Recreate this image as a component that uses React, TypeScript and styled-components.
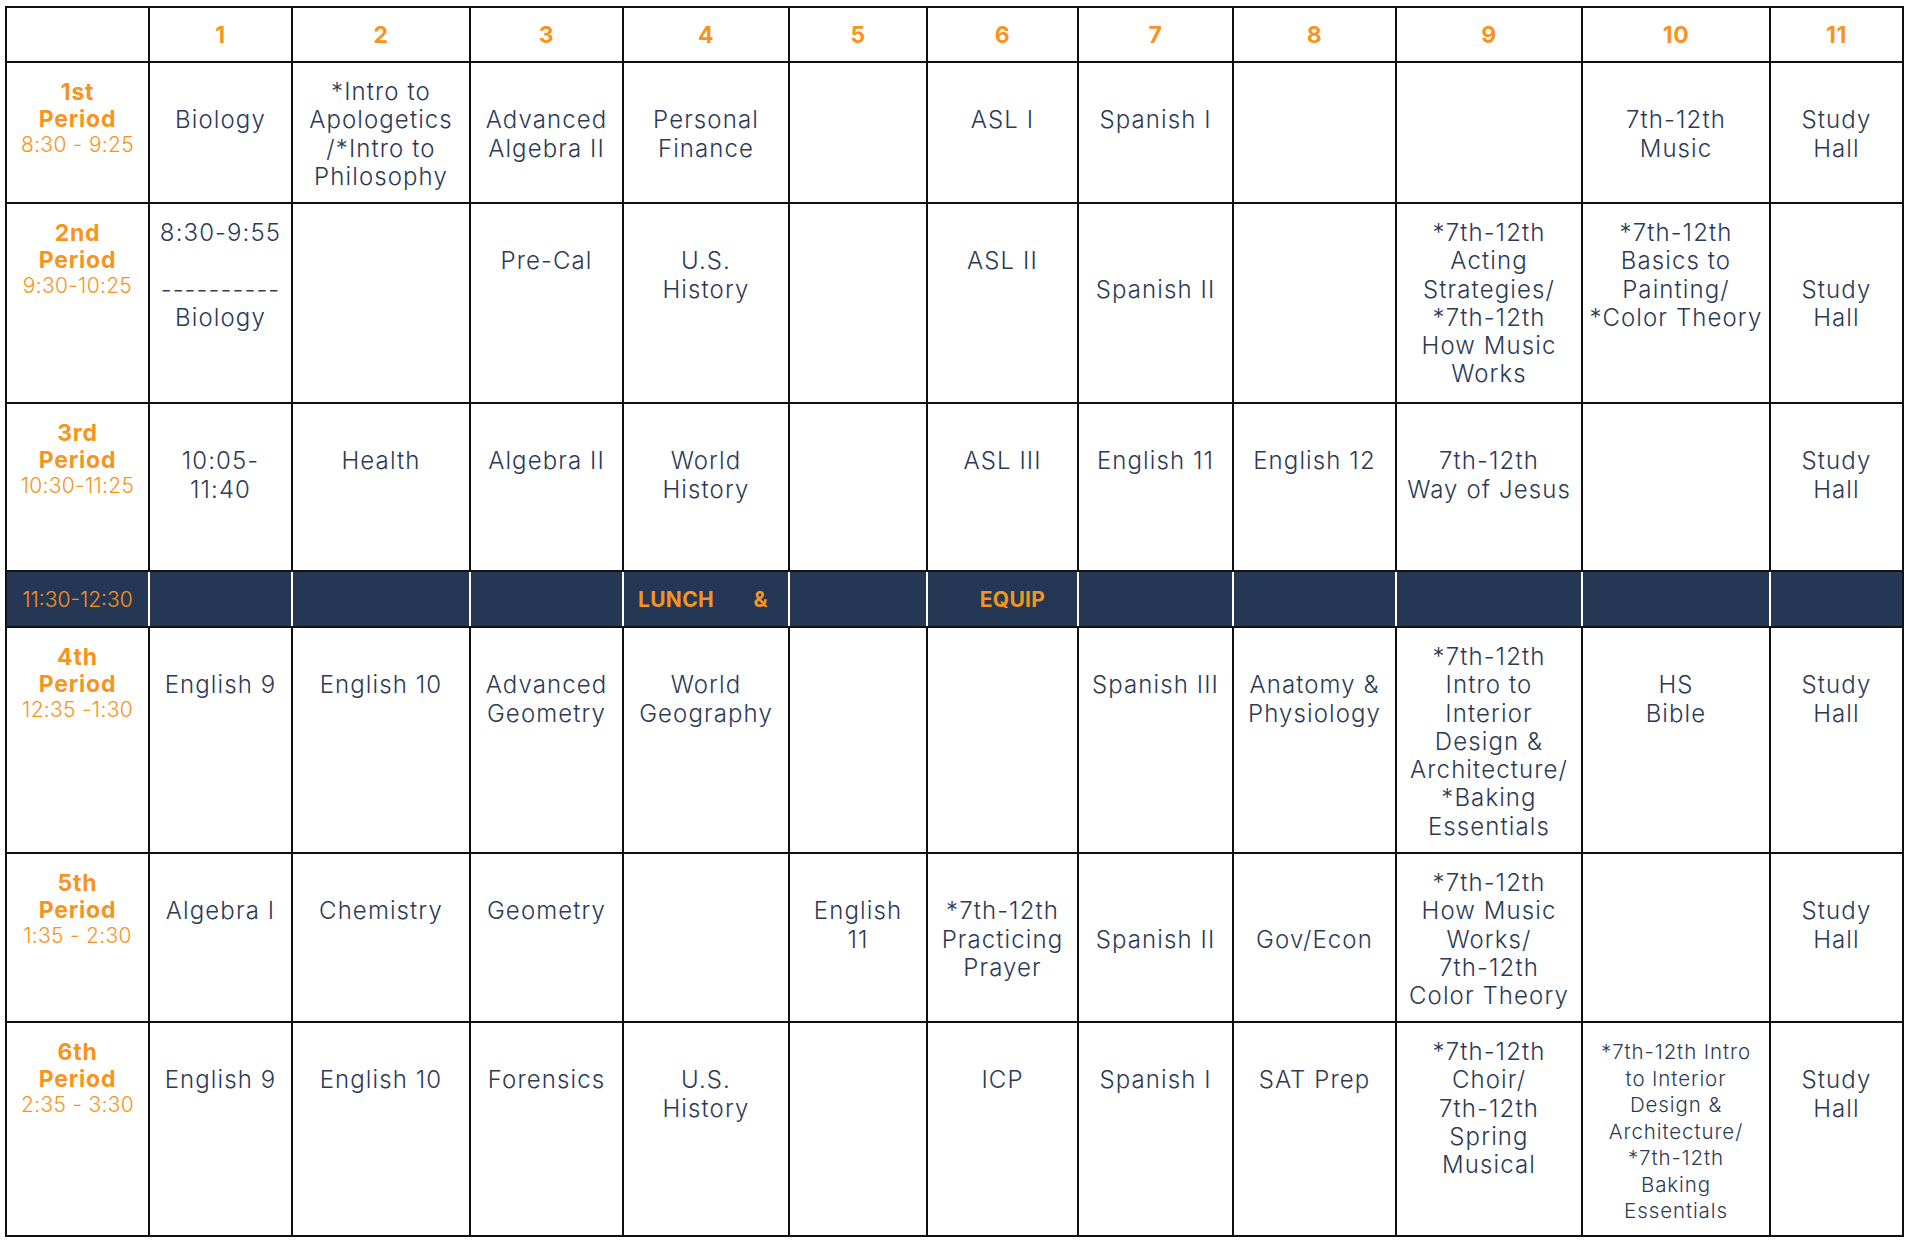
import React from 'react';
import styled, { createGlobalStyle } from 'styled-components';

const GlobalStyle = createGlobalStyle`
  html, body {
    margin: 0;
    padding: 0;
    background: #fff;
  }
  body {
    font-family: Inter, 'Noto Sans', sans-serif;
  }
`;

const ORANGE = '#f7941d';
const NAVY = '#243855';
const INK = '#2c3a56';

// track sizes measured off the printed schedule
const COLUMNS = [141, 141, 176, 151, 164, 136, 149, 153, 161, 184, 186, 131];
const ROWS = [53, 139, 198, 166, 54, 224, 167, 212];

type Entry = string[] | { small: true; lines: string[] };

type Period = {
  name: string;
  time: string;
  classes: Entry[];
};

const periods: Period[] = [
  {
    name: '1st',
    time: '8:30 - 9:25',
    classes: [
      ['', 'Biology'],
      ['*Intro to', 'Apologetics', '/*Intro to', 'Philosophy'],
      ['', 'Advanced', 'Algebra II'],
      ['', 'Personal', 'Finance'],
      [],
      ['', 'ASL I'],
      ['', 'Spanish I'],
      [],
      [],
      ['', '7th-12th', 'Music'],
      ['', 'Study', 'Hall'],
    ],
  },
  {
    name: '2nd',
    time: '9:30-10:25',
    classes: [
      ['8:30-9:55', '', '----------', 'Biology'],
      [],
      ['', 'Pre-Cal'],
      ['', 'U.S.', 'History'],
      [],
      ['', 'ASL II'],
      ['', '', 'Spanish II'],
      [],
      ['*7th-12th', 'Acting', 'Strategies/', '*7th-12th', 'How Music', 'Works'],
      ['*7th-12th', 'Basics to', 'Painting/', '*Color Theory'],
      ['', '', 'Study', 'Hall'],
    ],
  },
  {
    name: '3rd',
    time: '10:30-11:25',
    classes: [
      ['', '10:05-', '11:40'],
      ['', 'Health'],
      ['', 'Algebra II'],
      ['', 'World', 'History'],
      [],
      ['', 'ASL III'],
      ['', 'English 11'],
      ['', 'English 12'],
      ['', '7th-12th', 'Way of Jesus'],
      [],
      ['', 'Study', 'Hall'],
    ],
  },
  {
    name: '4th',
    time: '12:35 -1:30',
    classes: [
      ['', 'English 9'],
      ['', 'English 10'],
      ['', 'Advanced', 'Geometry'],
      ['', 'World', 'Geography'],
      [],
      [],
      ['', 'Spanish III'],
      ['', 'Anatomy &', 'Physiology'],
      ['*7th-12th', 'Intro to', 'Interior', 'Design &', 'Architecture/', '*Baking', 'Essentials'],
      ['', 'HS', 'Bible'],
      ['', 'Study', 'Hall'],
    ],
  },
  {
    name: '5th',
    time: '1:35 - 2:30',
    classes: [
      ['', 'Algebra I'],
      ['', 'Chemistry'],
      ['', 'Geometry'],
      [],
      ['', 'English', '11'],
      ['', '*7th-12th', 'Practicing', 'Prayer'],
      ['', '', 'Spanish II'],
      ['', '', 'Gov/Econ'],
      ['*7th-12th', 'How Music', 'Works/', '7th-12th', 'Color Theory'],
      [],
      ['', 'Study', 'Hall'],
    ],
  },
  {
    name: '6th',
    time: '2:35 - 3:30',
    classes: [
      ['', 'English 9'],
      ['', 'English 10'],
      ['', 'Forensics'],
      ['', 'U.S.', 'History'],
      [],
      ['', 'ICP'],
      ['', 'Spanish I'],
      ['', 'SAT Prep'],
      ['*7th-12th', 'Choir/', '7th-12th', 'Spring', 'Musical'],
      {
        small: true,
        lines: ['*7th-12th Intro', 'to Interior', 'Design &', 'Architecture/', '*7th-12th', 'Baking', 'Essentials'],
      },
      ['', 'Study', 'Hall'],
    ],
  },
];

const renderLines = (lines: string[]) =>
  lines.map((line, i) => <Line key={i}>{line || '\u00a0'}</Line>);

const PeriodRow = ({ period }: { period: Period }) => (
  <>
    <LabelCell>
      <LabelName>{period.name}</LabelName>
      <LabelName>Period</LabelName>
      <LabelTime>{period.time}</LabelTime>
    </LabelCell>
    {period.classes.map((entry, i) =>
      Array.isArray(entry) ? (
        <Cell key={i}>{renderLines(entry)}</Cell>
      ) : (
        <Cell key={i} $small>
          {renderLines(entry.lines)}
        </Cell>
      )
    )}
  </>
);

const LunchRow = () => (
  <>
    <LunchCell>
      <LunchTime>11:30-12:30</LunchTime>
    </LunchCell>
    <LunchCell $divider />
    <LunchCell $divider />
    <LunchCell $divider />
    <LunchCell $divider $spread>
      <LunchWord>LUNCH</LunchWord>
      <LunchWord>&amp;</LunchWord>
    </LunchCell>
    <LunchCell $divider />
    <LunchCell $divider $nudge>
      <LunchWord>EQUIP</LunchWord>
    </LunchCell>
    <LunchCell $divider />
    <LunchCell $divider />
    <LunchCell $divider />
    <LunchCell $divider />
    <LunchCell $divider />
  </>
);

const App = () => {
  return (
    <>
      <GlobalStyle />
      <Page>
        <Schedule>
          <HeadCell />
          {Array.from({ length: 11 }, (_, i) => (
            <HeadCell key={i}>{i + 1}</HeadCell>
          ))}
          {periods.slice(0, 3).map((p) => (
            <PeriodRow key={p.name} period={p} />
          ))}
          <LunchRow />
          {periods.slice(3).map((p) => (
            <PeriodRow key={p.name} period={p} />
          ))}
        </Schedule>
      </Page>
    </>
  );
};

export default App;

const Page = styled.div`
  padding: 6px 0 0 5px;
`;

const Schedule = styled.div`
  display: grid;
  grid-template-columns: ${COLUMNS.map((c) => `${c}px`).join(' ')};
  grid-template-rows: ${ROWS.map((r) => `${r}px`).join(' ')};
  gap: 2px;
  padding: 2px;
  width: max-content;
  background: #111;
`;

const HeadCell = styled.div`
  display: flex;
  align-items: center;
  justify-content: center;
  background: #fff;
  color: ${ORANGE};
  font-size: 23px;
  font-weight: 700;
  letter-spacing: 0.5px;
`;

const LabelCell = styled.div`
  display: flex;
  flex-direction: column;
  align-items: center;
  padding-top: 16px;
  background: #fff;
  color: ${ORANGE};
  line-height: 26.5px;
  white-space: nowrap;
`;

const LabelName = styled.div`
  font-size: 23px;
  font-weight: 700;
  letter-spacing: 0.8px;
`;

const LabelTime = styled.div`
  font-size: 21px;
  font-weight: 300;
  letter-spacing: 0.3px;
`;

const Cell = styled.div<{ $small?: boolean }>`
  padding-top: ${({ $small }) => ($small ? '16px' : '15px')};
  background: #fff;
  color: ${INK};
  text-align: center;
  font-size: ${({ $small }) => ($small ? '20.5px' : '24px')};
  line-height: ${({ $small }) => ($small ? '26.5px' : '28.3px')};
  font-weight: 300;
  letter-spacing: ${({ $small }) => ($small ? '0.9px' : '1.1px')};
  white-space: nowrap;
`;

const Line = styled.div``;

const LunchCell = styled.div<{ $divider?: boolean; $spread?: boolean; $nudge?: boolean }>`
  display: flex;
  align-items: center;
  justify-content: ${({ $spread }) => ($spread ? 'space-between' : 'center')};
  padding: ${({ $spread, $nudge }) =>
    $spread ? '0 20px 0 14px' : $nudge ? '0 0 0 20px' : '0'};
  background: ${NAVY};
  box-shadow: ${({ $divider }) => ($divider ? '-2px 0 0 #fff' : 'none')};
  color: ${ORANGE};
`;

const LunchTime = styled.span`
  font-size: 21px;
  font-weight: 300;
`;

const LunchWord = styled.span`
  font-size: 21px;
  font-weight: 700;
  letter-spacing: 0.3px;
`;
